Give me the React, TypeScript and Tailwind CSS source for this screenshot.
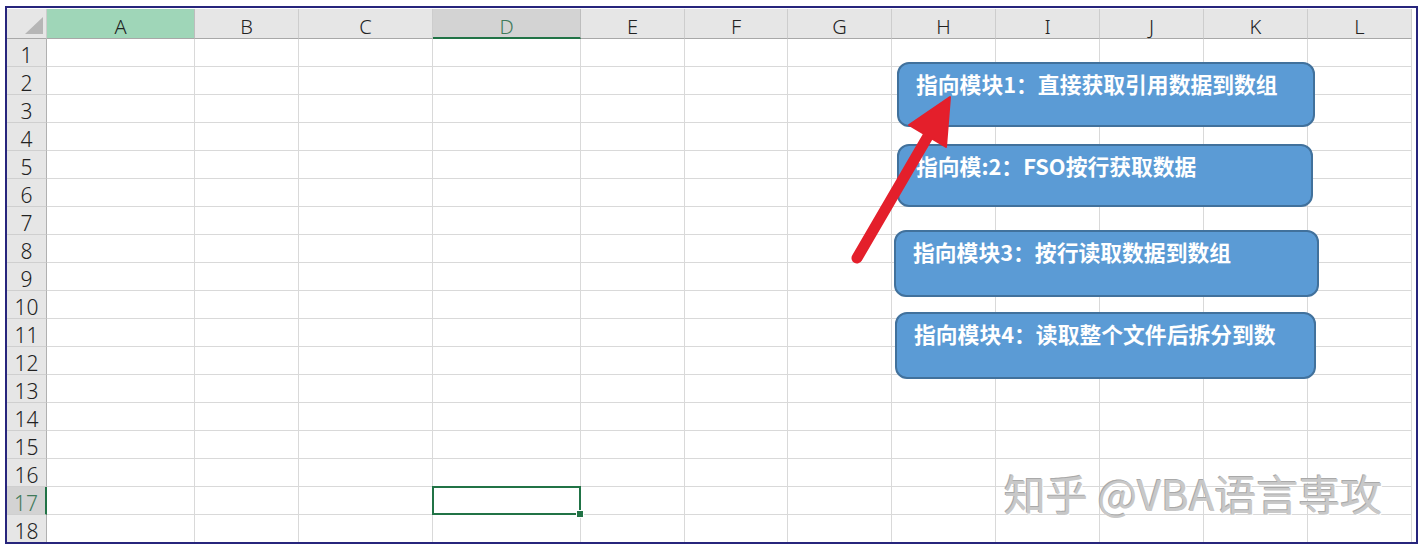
const cols = ["A", "B", "C", "D", "E", "F", "G", "H", "I", "J", "K", "L"];
const rows = Array.from({ length: 18 }, (_, i) => i + 1);

const boxes = [
  { text: "指向模块1：直接获取引用数据到数组", cls: "left-[897px] top-[62px] w-[418px] h-[65px]" },
  { text: "指向模:2：FSO按行获取数据", cls: "left-[897px] top-[144px] w-[416px] h-[63px]" },
  { text: "指向模块3：按行读取数据到数组", cls: "left-[894px] top-[230px] w-[425px] h-[67px]" },
  { text: "指向模块4：读取整个文件后拆分到数", cls: "left-[895px] top-[312px] w-[421px] h-[67px]" },
];

function ColHeader({ c }: { c: string }) {
  if (c === "A") {
    return (
      <div className="flex items-center justify-center border-r border-b border-[#bdbdbd] border-b-[#a8a8a8] bg-[#9fd6b8] pt-[6px] text-[20px] text-[#222]">
        {c}
      </div>
    );
  }
  if (c === "D") {
    return (
      <div className="flex items-center justify-center border-r border-b-2 border-[#bdbdbd] border-b-[#217346] bg-[#d3d3d3] pt-[7px] text-[20px] text-[#3f7a5a]">
        {c}
      </div>
    );
  }
  return (
    <div className="flex items-center justify-center border-r border-b border-[#cdcdcd] border-b-[#a8a8a8] bg-[#e6e6e6] pt-[6px] text-[20px] text-[#222]">
      {c}
    </div>
  );
}

function RowHeader({ r }: { r: number }) {
  const active = r === 17;
  return (
    <div
      className={
        active
          ? "flex items-center justify-center border-r-2 border-b border-[#cfcfcf] border-r-[#217346] bg-[#d3d3d3] pt-[6px] text-[21px] text-[#3f7a5a]"
          : "flex items-center justify-center border-r border-b border-[#cfcfcf] border-r-[#b0b0b0] bg-[#e6e6e6] pt-[6px] text-[21px] text-[#222]"
      }
    >
      {r}
    </div>
  );
}

export default function App() {
  return (
    <div className="relative h-[551px] w-[1422px] overflow-hidden bg-white pl-[5px] pt-[6px] font-['Noto_Sans',sans-serif]">
      <div className="h-[538px] w-[1413px] overflow-hidden border-2 border-[#27257c] pt-px">
        <div className="grid grid-cols-[40px_148px_104px_134px_148px_104px_103px_104px_104px_104px_104px_104px_104px] grid-rows-[30px_repeat(18,28px)] font-light">
          <div className="flex items-end justify-end border-r border-b border-[#cdcdcd] border-b-[#a8a8a8] bg-[#e6e6e6] pr-[3px] pb-[4px]">
            <svg width="18" height="17" viewBox="0 0 18 17">
              <polygon points="18,0 18,17 0,17" fill="#b6b6b6" />
            </svg>
          </div>
          {cols.map((c) => (
            <ColHeader key={c} c={c} />
          ))}
          {rows.map((r) => (
            <>
              <RowHeader key={"h" + r} r={r} />
              {cols.map((c) => (
                <div key={c + r} className="relative border-r border-b border-[#d9d9d9]">
                  {c === "D" && r === 17 && (
                    <div className="absolute -top-px -left-px -right-px -bottom-px z-10 border-2 border-[#217346]">
                      <div className="absolute -right-[5px] -bottom-[5px] h-[8px] w-[8px] border border-white bg-[#217346]" />
                    </div>
                  )}
                </div>
              ))}
            </>
          ))}
        </div>
      </div>

      {boxes.map((b) => (
        <div
          key={b.text}
          className={`absolute ${b.cls} rounded-[12px] border-2 border-[#41719c] bg-[#5b9bd5] pl-[17px] pt-[5px] font-['Noto_Sans_CJK_SC',sans-serif] text-[21.8px] leading-[30px] font-bold text-white`}
        >
          {b.text}
        </div>
      ))}

      <svg className="pointer-events-none absolute top-0 left-0" width="1422" height="551" viewBox="0 0 1422 551">
        <line x1="857" y1="258" x2="931" y2="131" stroke="#e41f2b" strokeWidth="11" strokeLinecap="round" />
        <polygon points="950,97 946,147 909,125" fill="#e41f2b" stroke="#e41f2b" strokeWidth="2" strokeLinejoin="round" />
      </svg>

      <div className="absolute top-[468px] left-[1004px] font-['Noto_Sans_CJK_SC',sans-serif] text-[42px] leading-[50px] whitespace-nowrap text-[#c8c8c8] [text-shadow:-1px_-1px_0_#a9a9a9,1px_1px_0_#ffffff]">
        知乎 @VBA语言専攻
      </div>
    </div>
  );
}
